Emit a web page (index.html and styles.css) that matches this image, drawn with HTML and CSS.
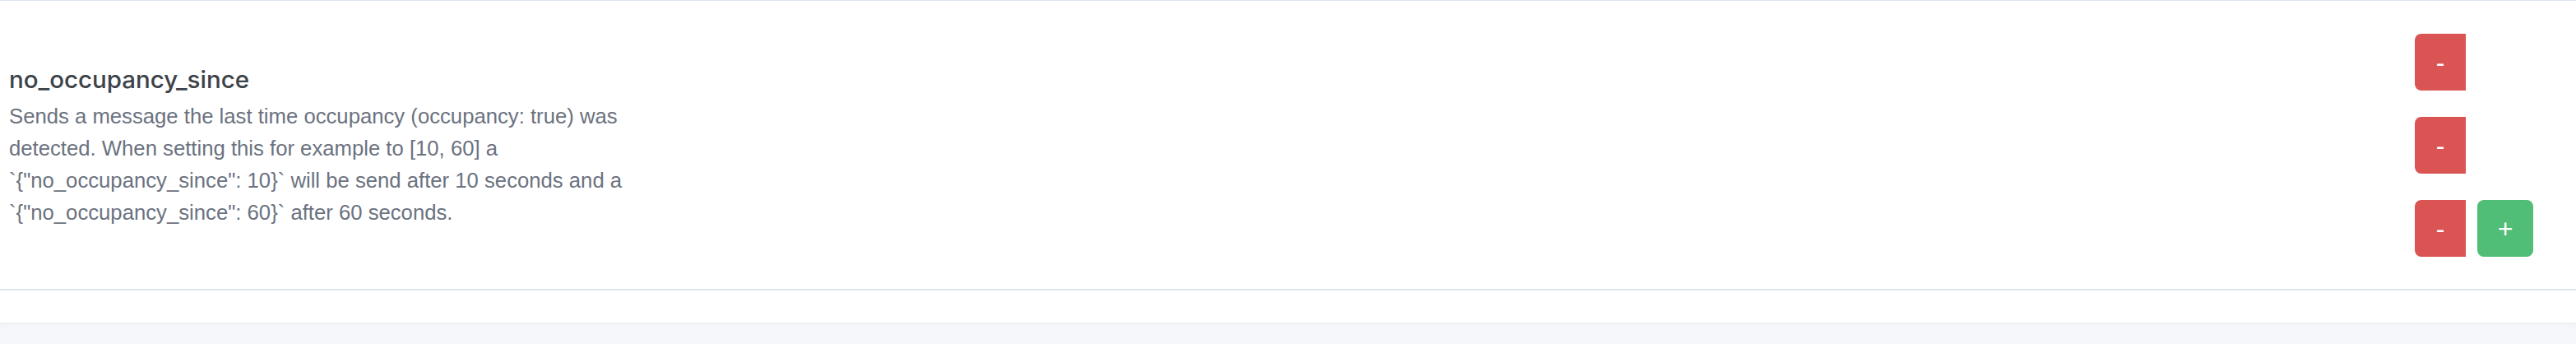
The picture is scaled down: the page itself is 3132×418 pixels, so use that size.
FILE: index.html
```html
<!DOCTYPE html>
<html lang="en">
<head>
<meta charset="utf-8">
<title>no_occupancy_since</title>
<link rel="stylesheet" href="styles.css">
</head>
<body>
<div class="setting">
  <div class="info">
    <h3 class="title">no_occupancy_since</h3>
    <p class="desc">Sends a message the last time occupancy (occupancy: true) was detected. When setting this for example to [10, 60] a `{"no_occupancy_since": 10}` will be send after 10 seconds and a `{"no_occupancy_since": 60}` after 60 seconds.</p>
  </div>
  <div class="controls">
    <div class="ctl-row"><button class="btn btn-remove">-</button></div>
    <div class="ctl-row"><button class="btn btn-remove">-</button></div>
    <div class="ctl-row"><button class="btn btn-remove">-</button><button class="btn btn-add">+</button></div>
  </div>
</div>
<div class="spacer"></div>
<div class="footer-bg"></div>
</body>
</html>
```
FILE: styles.css
```css
html, body {
  margin: 0;
  padding: 0;
  background: #ffffff;
  font-family: "Liberation Sans", Arial, sans-serif;
}

.setting {
  display: flex;
  align-items: center;
  justify-content: space-between;
  border-top: 1px solid #dde4ec;
  border-bottom: 2px solid #dde4ec;
  padding: 40px 52px 39px 11px;
}

.info {
  width: 790px;
}

.title {
  margin: 0 0 6px 0;
  font-family: Inter, "Liberation Sans", sans-serif;
  font-size: 29.5px;
  font-weight: 500;
  line-height: 40px;
  color: #3d4349;
}

.desc {
  margin: 0;
  font-size: 25.7px;
  line-height: 39px;
  color: #6b7280;
}

.controls {
  display: flex;
  flex-direction: column;
  gap: 32px;
}

.ctl-row {
  display: flex;
  gap: 14px;
  height: 69px;
}

.btn {
  border: none;
  padding: 0;
  margin: 0;
  height: 69px;
  color: #ffffff;
  font-family: "Liberation Sans", Arial, sans-serif;
  font-size: 32px;
  line-height: 1;
  cursor: pointer;
}

.btn-remove {
  width: 62px;
  background: #d95452;
  border-radius: 8px 0 0 8px;
}

.btn-add {
  width: 68px;
  background: #50be76;
  border-radius: 8px;
}

.spacer {
  height: 39px;
}

.footer-bg {
  height: 26px;
  background: #f5f7fa;
  box-shadow: inset 0 4px 6px -3px rgba(0, 0, 0, 0.05);
}
```
